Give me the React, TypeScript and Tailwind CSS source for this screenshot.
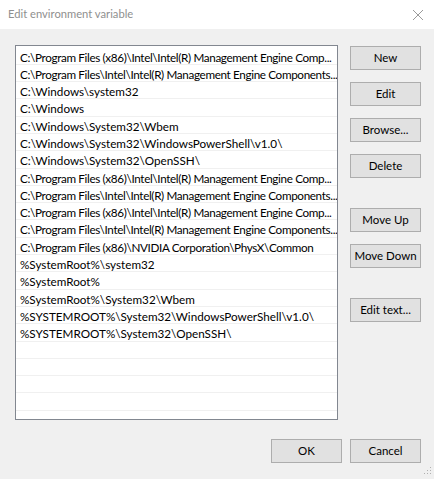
import React from "react";

const paths = [
    "C:\\Program Files (x86)\\Intel\\Intel(R) Management Engine Comp...",
    "C:\\Program Files\\Intel\\Intel(R) Management Engine Components...",
    "C:\\Windows\\system32",
    "C:\\Windows",
    "C:\\Windows\\System32\\Wbem",
    "C:\\Windows\\System32\\WindowsPowerShell\\v1.0\\",
    "C:\\Windows\\System32\\OpenSSH\\",
    "C:\\Program Files (x86)\\Intel\\Intel(R) Management Engine Comp...",
    "C:\\Program Files\\Intel\\Intel(R) Management Engine Components...",
    "C:\\Program Files (x86)\\Intel\\Intel(R) Management Engine Comp...",
    "C:\\Program Files\\Intel\\Intel(R) Management Engine Components...",
    "C:\\Program Files (x86)\\NVIDIA Corporation\\PhysX\\Common",
    "%SystemRoot%\\system32",
    "%SystemRoot%",
    "%SystemRoot%\\System32\\Wbem",
    "%SYSTEMROOT%\\System32\\WindowsPowerShell\\v1.0\\",
    "%SYSTEMROOT%\\System32\\OpenSSH\\",
];

const rows = [...paths, ...Array(6).fill("")];

const Btn: React.FC<{ label: string; className?: string }> = ({ label, className = "" }) => (
    <button
        className={`h-[24px] w-[71px] bg-[#e1e1e1] border border-[#adadad] text-[11.5px] text-black flex items-center justify-center whitespace-nowrap ${className}`}
    >
        {label}
    </button>
);

const App: React.FC = () => {
    return (
        <div
            className="w-[434px] h-[479px] flex flex-col bg-white overflow-hidden"
            style={{ fontFamily: 'Lato, "Noto Sans", sans-serif' }}
        >
            {/* title bar */}
            <div className="h-[29px] flex items-center justify-between pl-[8px] pr-[10px] bg-white">
                <span className="text-[11.2px] text-[#8f8f8f]">Edit environment variable</span>
                <svg width="12" height="12" viewBox="0 0 12 12" className="text-[#9a9a9a]">
                    <path d="M1 1 L11 11 M11 1 L1 11" stroke="currentColor" strokeWidth="1" fill="none" />
                </svg>
            </div>

            <div className="relative flex-1 bg-[#f0f0f0] pl-[15px] pt-[16px]">
                <div className="flex gap-[12px]">
                    {/* list */}
                    <div className="w-[323px] h-[375px] bg-white border border-[#828790] pt-[1.5px] overflow-hidden">
                        {rows.map((p, i) => (
                            <div
                                key={i}
                                className={`h-[17.3px] border-b border-[#f0f0f0] pl-[4px] pt-[2px] text-[11.7px] leading-[15px] text-black whitespace-nowrap overflow-hidden ${
                                    p.includes("Program Files") ? "tracking-[-0.35px]" : ""
                                }`}
                            >
                                {p}
                            </div>
                        ))}
                    </div>

                    {/* side buttons */}
                    <div className="flex flex-col pt-[1px]">
                        <Btn label="New" />
                        <Btn label="Edit" className="mt-[12px]" />
                        <Btn label="Browse..." className="mt-[12px]" />
                        <Btn label="Delete" className="mt-[12px]" />
                        <Btn label="Move Up" className="mt-[30px]" />
                        <Btn label="Move Down" className="mt-[12px]" />
                        <Btn label="Edit text..." className="mt-[30px]" />
                    </div>
                </div>

                <div className="flex justify-end gap-[8px] pr-[13px] mt-[19px]">
                    <Btn label="OK" className="w-[70px]" />
                    <Btn label="Cancel" className="w-[70px]" />
                </div>

                {/* resize grip */}
                <svg width="8" height="8" viewBox="0 0 8 8" className="absolute right-[2px] bottom-[4px]">
                    <rect x="6" y="0" width="1" height="1" fill="#b0b0b0" />
                    <rect x="3" y="3" width="1" height="1" fill="#b0b0b0" />
                    <rect x="6" y="3" width="1" height="1" fill="#b0b0b0" />
                    <rect x="0" y="6" width="1" height="1" fill="#b0b0b0" />
                    <rect x="3" y="6" width="1" height="1" fill="#b0b0b0" />
                    <rect x="6" y="6" width="1" height="1" fill="#b0b0b0" />
                </svg>
            </div>
        </div>
    );
};

export default App;
